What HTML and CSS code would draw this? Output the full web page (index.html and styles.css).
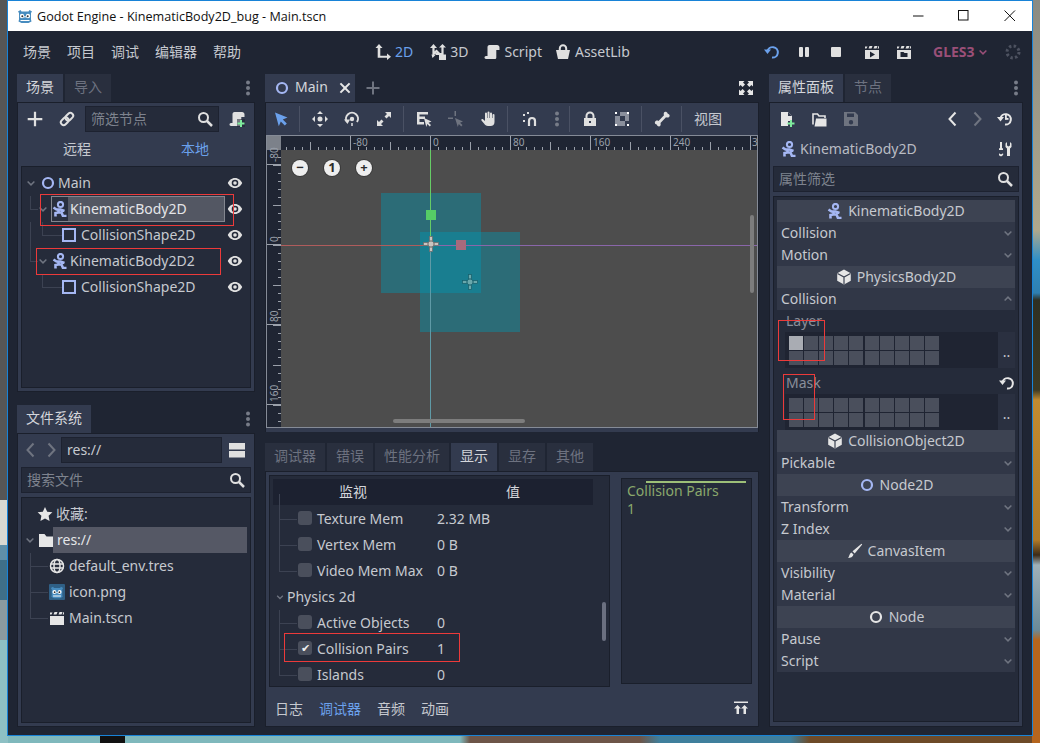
FILE: index.html
```html
<!DOCTYPE html>
<html lang="zh">
  <head>
    <meta charset="UTF-8" />
    <title>Godot Engine - KinematicBody2D_bug - Main.tscn</title>
    <link rel="stylesheet" href="styles.css">
  </head>
  <body>
    <!-- icon sheet -->
    <svg class="defs" xmlns="http://www.w3.org/2000/svg">
      <symbol id="i-godot" viewBox="0 0 16 16">
        <path fill="#478cbf" d="M2 5 1 3.5 3.5 2l1 1.500h7l1-1.500L15 3.500 14 5v6.500l.5 2-3 1.500H4.500l-3-1.500.5-2z"/>
        <circle cx="5" cy="8" r="2.200" fill="#fff"/><circle cx="11" cy="8" r="2.200" fill="#fff"/>
        <circle cx="5.300" cy="8.200" r="1" fill="#333"/><circle cx="10.700" cy="8.200" r="1" fill="#333"/>
        <path fill="#fff" d="M7.300 8h1.400v1.500H7.300zM3.500 12h9v1h-9z"/>
      </symbol>
      <symbol id="i-2d" viewBox="0 0 16 16">
        <path fill="currentColor" d="M4 0l3.500 4h-2.200v7.700H12V9.500l4 3.300-4 3.200v-2.300H2.700V4H.5z"/>
      </symbol>
      <symbol id="i-3d" viewBox="0 0 16 16">
        <path fill="none" stroke="currentColor" stroke-width="2.200" d="M3.500 3v7l3-3 6 6M12.500 3v7h-7"/>
        <path fill="currentColor" d="M0 4l3.500-4L7 4zM9 3.500L12.500 0 16 3.500zM9 10.500h7V16H9zM1.500 10.500l4 .5-3 3z"/>
      </symbol>
      <symbol id="i-script" viewBox="0 0 16 16">
        <path fill="currentColor" d="M5.500 1H13c1.500 0 2.500 1 2.500 2.500V6h-3.200v7.500c0 1-.7 1.500-1.500 1.500H2c-1 0-1.500-.7-1.500-1.400S1 12 2 12h1.500V3c0-1.300 1-2 2-2z"/>
      </symbol>
      <symbol id="i-bag" viewBox="0 0 16 16">
        <path fill="none" stroke="currentColor" stroke-width="2" d="M4.800 7V4.500a3.200 3.200 0 0 1 6.400 0V7"/>
        <path fill="currentColor" d="M1 6h14l-2 9H3z"/>
      </symbol>
      <symbol id="i-reload" viewBox="0 0 16 16">
        <path fill="none" stroke="currentColor" stroke-width="2" d="M3.500 7.500A5.200 5.200 0 1 1 8 13.500"/>
        <path fill="currentColor" d="M0 5.500h7L3.500 10z"/>
      </symbol>
      <symbol id="i-pause" viewBox="0 0 16 16">
        <rect x="3" y="3" width="4" height="10" rx="1" fill="currentColor"/><rect x="9" y="3" width="4" height="10" rx="1" fill="currentColor"/>
      </symbol>
      <symbol id="i-stop" viewBox="0 0 16 16"><rect x="3" y="3" width="10" height="10" rx="1" fill="currentColor"/></symbol>
      <symbol id="i-clap" viewBox="0 0 16 16">
        <path fill="currentColor" d="M1 6h14v9H1zM1 2.500h2.500l-1 2H1zM5.500 2h3l-1 2.500h-3zM10.500 2h3l-1 2.500h-3zM14.500 2h.5v2.500h-1.500z"/>
      </symbol>
      <symbol id="i-clap-play" viewBox="0 0 16 16">
        <use href="#i-clap"/><path fill="#1f2533" d="M6 7.500l5 3-5 3z"/>
      </symbol>
      <symbol id="i-clap-folder" viewBox="0 0 16 16">
        <use href="#i-clap"/><path fill="#1f2533" d="M4.500 8h3l1 1h3v4h-7z"/>
      </symbol>
      <symbol id="i-spin" viewBox="0 0 16 16">
        <circle cx="8" cy="8" r="6" fill="none" stroke="#4d5260" stroke-width="3" stroke-dasharray="2.400 2.300"/>
      </symbol>
      <symbol id="i-expand" viewBox="0 0 16 16">
        <path id="corner" fill="currentColor" d="M1 1h5.500L5 2.600l2 2L4.600 7l-2-2L1 6.500z"/>
        <use href="#corner" transform="matrix(-1 0 0 1 16 0)"/>
        <use href="#corner" transform="matrix(1 0 0 -1 0 16)"/>
        <use href="#corner" transform="matrix(-1 0 0 -1 16 16)"/>
      </symbol>
      <symbol id="i-dots" viewBox="0 0 16 16">
        <circle cx="8" cy="2.500" r="2" fill="currentColor"/><circle cx="8" cy="8" r="2" fill="currentColor"/><circle cx="8" cy="13.500" r="2" fill="currentColor"/>
      </symbol>
      <symbol id="i-plus" viewBox="0 0 16 16"><path fill="currentColor" d="M7 1.500h2V7h5.500v2H9v5.500H7V9H1.500V7H7z"/></symbol>
      <symbol id="i-close" viewBox="0 0 16 16"><path fill="currentColor" d="M7 1.500h2V7h5.500v2H9v5.500H7V9H1.500V7H7z" transform="rotate(45 8 8)"/></symbol>
      <symbol id="i-link" viewBox="0 0 16 16">
        <g fill="none" stroke="currentColor" stroke-width="2" transform="rotate(-45 8 8)"><rect x=".5" y="5.200" width="8.500" height="5.600" rx="2.800"/><rect x="7" y="5.200" width="8.500" height="5.600" rx="2.800"/></g>
      </symbol>
      <symbol id="i-search" viewBox="0 0 16 16">
        <circle cx="6.500" cy="6.500" r="4.500" fill="none" stroke="currentColor" stroke-width="2"/>
        <path stroke="currentColor" stroke-width="2.500" d="M10 10l5 5"/>
      </symbol>
      <symbol id="i-script-add" viewBox="0 0 16 16">
        <use href="#i-script"/>
        <path fill="#1f2533" d="M8 8h8v8H8z" opacity=".55"/><path fill="#7fec9d" d="M11 9h2v2.500h2.500v2H13V16h-2v-2.500H8.500v-2H11z"/>
      </symbol>
      <symbol id="i-arrow" viewBox="0 0 16 16"><path fill="currentColor" d="M2 1.500l12.500 5-4.700 2 4 4-2 2-4-4-2 4.700z"/></symbol>
      <symbol id="i-move" viewBox="0 0 16 16">
        <circle cx="8" cy="8" r="2.500" fill="currentColor"/>
        <path fill="currentColor" d="M8 0l3 3H5zM8 16l-3-3h6zM0 8l3-3v6zM16 8l-3 3V5z"/>
      </symbol>
      <symbol id="i-rotate" viewBox="0 0 16 16">
        <path fill="none" stroke="currentColor" stroke-width="2" d="M3 11A6 6 0 1 1 13 11"/>
        <path fill="currentColor" d="M0 8.500h6L3.500 13z"/><circle cx="8" cy="8" r="2.200" fill="currentColor"/>
        <path fill="none" stroke="currentColor" stroke-width="1.500" d="M8 12v3"/>
      </symbol>
      <symbol id="i-scale" viewBox="0 0 16 16">
        <path fill="currentColor" d="M9 1h6v6l-2-2-2.500 2.500-2-2L11 3zM7 15H1V9l2 2 2.500-2.500 2 2L5 13z"/>
      </symbol>
      <symbol id="i-list-select" viewBox="0 0 16 16">
        <path fill="currentColor" d="M1 1h11v2.500H3.500v2H9V8H3.500v3H8v2.500H1z"/>
        <path fill="currentColor" d="M8 7l7.500 3.500-3 1.200 2.500 2.300-1.200 1.500-2.500-2.500-1 3z"/>
      </symbol>
      <symbol id="i-pivot-dim" viewBox="0 0 16 16">
        <path fill="currentColor" d="M6.500 0h1.500v5H6.500zM0 6.500h5V8H0zM7 7l8 3.500-3 1.200 2.500 2.300-1.200 1.500-2.500-2.500-1 3z"/>
      </symbol>
      <symbol id="i-hand" viewBox="0 0 16 16">
        <path fill="currentColor" d="M5 7V2.500a1 1 0 0 1 2 0V7h.5V1.500a1 1 0 0 1 2 0V7h.5V2.500a1 1 0 0 1 2 0V7h.5V4a1 1 0 0 1 2 0v7c0 2.500-1.500 4-4 4H8c-2 0-3-1-4-2.500L1.500 9.500c-.8-1 .5-2.200 1.500-1.300L5 10z"/>
      </symbol>
      <symbol id="i-snap" viewBox="0 0 16 16">
        <path fill="none" stroke="currentColor" stroke-width="2.200" d="M7 15V10a3 3 0 0 1 6 0v5"/>
        <path fill="currentColor" d="M1 3h2v2H1zM5 1h2v2H5zM1 9h2v2H1z"/>
      </symbol>
      <symbol id="i-lock" viewBox="0 0 16 16">
        <path fill="none" stroke="currentColor" stroke-width="2" d="M4.500 8V5a3.500 3.500 0 0 1 7 0v3"/>
        <path fill="currentColor" fill-rule="evenodd" d="M2 7h12v8H2zM7 10v2h2v-2z"/>
      </symbol>
      <symbol id="i-group" viewBox="0 0 16 16">
        <path fill="#8a8f9c" d="M1 5h10v10H1z"/><path fill="#8a8f9c" d="M6 1h9v9H6z"/>
        <path fill="#333b4f" d="M6 5h5v5H6z"/>
        <path fill="#fff" d="M1 1h2v2H1zM13 1h2v2h-2zM1 13h2v2H1zM13 13h2v2h-2z"/>
      </symbol>
      <symbol id="i-bone" viewBox="0 0 16 16">
        <path fill="currentColor" d="M10 1.500c.8-1.300 3-1 3.500.7.200.5.500.7 1 .8 1.500.5 1.500 2.700.3 3.300-1 .5-2 .3-2.800 0L6.500 12c.3.800.3 1.800-.2 2.700-.6 1.200-2.800 1-3.300-.7-.2-.5-.5-.7-1-.8C.5 12.700.5 10.500 1.700 9.900c1-.5 2-.3 2.800 0L10 4.300c-.3-.8-.4-2 0-2.800z"/>
      </symbol>
      <symbol id="i-eye" viewBox="0 0 16 16">
        <path fill="currentColor" fill-rule="evenodd" d="M8 3C4.500 3 2 5.500 .8 8 2 10.500 4.500 13 8 13s6-2.500 7.200-5C14 5.500 11.500 3 8 3zm0 1.700a3.300 3.300 0 1 1 0 6.600 3.300 3.300 0 0 1 0-6.600z"/>
        <circle cx="8" cy="8" r="1.800" fill="currentColor"/>
      </symbol>
      <symbol id="i-down" viewBox="0 0 16 16"><path fill="none" stroke="currentColor" stroke-width="2" d="M3.500 6L8 10.500 12.500 6"/></symbol>
      <symbol id="i-up" viewBox="0 0 16 16"><path fill="none" stroke="currentColor" stroke-width="2" d="M3.500 10L8 5.500 12.500 10"/></symbol>
      <symbol id="i-left" viewBox="0 0 16 16"><path fill="none" stroke="currentColor" stroke-width="2" d="M10.500 1.500L4.500 8l6 6.500"/></symbol>
      <symbol id="i-right" viewBox="0 0 16 16"><path fill="none" stroke="currentColor" stroke-width="2" d="M5.500 1.500l6 6.500-6 6.500"/></symbol>
      <symbol id="i-body" viewBox="0 0 16 16">
        <circle cx="8.500" cy="3.500" r="2.600" fill="none" stroke="currentColor" stroke-width="2"/>
        <path fill="none" stroke="currentColor" stroke-width="2.600" d="M1.500 6.500l3 2h4l4 1.500M6.500 8.500v3l-3 .5v3.500M6.500 11.500h3l1.500 3.500h3.500"/>
      </symbol>
      <symbol id="i-square" viewBox="0 0 16 16"><rect x="2" y="2" width="12" height="12" fill="none" stroke="currentColor" stroke-width="2"/></symbol>
      <symbol id="i-circle" viewBox="0 0 16 16"><circle cx="8" cy="8" r="5" fill="none" stroke="currentColor" stroke-width="2.200"/></symbol>
      <symbol id="i-split" viewBox="0 0 16 16"><path fill="currentColor" d="M0 1h16v6.500H0zM0 9h16v6.500H0z"/></symbol>
      <symbol id="i-star" viewBox="0 0 16 16"><path fill="currentColor" d="M8 1l2.200 4.700 5.200.6-3.800 3.500 1 5.200L8 12.400 3.400 15l1-5.200L.6 6.300l5.200-.6z"/></symbol>
      <symbol id="i-folder" viewBox="0 0 16 16"><path fill="currentColor" d="M1 2h5.500l2 2.500H15V15H1z"/></symbol>
      <symbol id="i-folder-open" viewBox="0 0 16 16">
        <path fill="none" stroke="currentColor" stroke-width="1.600" d="M2 13.500V3h4.500l1.500 2h6v2"/>
        <path fill="currentColor" d="M3.500 15.500l1.500-8h10.500v8z"/>
      </symbol>
      <symbol id="i-globe" viewBox="0 0 16 16">
        <g fill="none" stroke="currentColor" stroke-width="1.500"><circle cx="8" cy="8" r="6.500"/><ellipse cx="8" cy="8" rx="3" ry="6.500"/><path d="M1.500 6h13M1.500 10h13"/></g>
      </symbol>
      <symbol id="i-icon-file" viewBox="0 0 16 16">
        <rect width="16" height="16" rx="1" fill="#2f5f85"/>
        <use href="#i-godot" x="1" y="1" width="14" height="14"/>
      </symbol>
      <symbol id="i-file-add" viewBox="0 0 16 16">
        <path fill="currentColor" d="M2 1h7l4 4v5H9v5H2z"/><path fill="#333b4f" d="M9 1v4h4z"/>
        <path fill="#7fec9d" d="M11 9h2v2.500h2.500v2H13V16h-2v-2.500H8.500v-2H11z"/>
      </symbol>
      <symbol id="i-save" viewBox="0 0 16 16">
        <path fill="currentColor" fill-rule="evenodd" d="M1 1h11l3 3v11H1zM4 2.500V6h7V2.500zM8 9a2.200 2.200 0 1 0 0 4.400A2.200 2.200 0 0 0 8 9z"/>
      </symbol>
      <symbol id="i-history" viewBox="0 0 16 16">
        <path fill="none" stroke="currentColor" stroke-width="2" d="M3.500 7.500A5.200 5.200 0 1 1 8 13.500"/>
        <path fill="currentColor" d="M0 6h7l-3.500 4.500zM8 4h1.800v4.200H8z"/><path fill="currentColor" d="M8 7h3.500v1.800H8z"/>
      </symbol>
      <symbol id="i-tools" viewBox="0 0 16 16">
        <path fill="currentColor" d="M3 1h2v6l1 .5V12a2 2 0 0 1-4 2v-2V7.500L3 7zM2 9v3a2.200 2.200 0 0 0 4 0V9zM10 1v3.500l1.500 1L13 4.500V1l1.500 1.500V6L13 7.500V15h-3V7.500L8.500 6V2.500z"/>
      </symbol>
      <symbol id="i-cube" viewBox="0 0 16 16">
        <path fill="currentColor" d="M8 .5l6.800 3.700v7.600L8 15.500l-6.800-3.700V4.200z"/>
        <path fill="none" stroke="#3d4352" stroke-width="1.200" d="M1.500 4.500L8 8l6.500-3.500M8 8v7"/>
      </symbol>
      <symbol id="i-brush" viewBox="0 0 16 16">
        <path fill="currentColor" d="M14.500.8l.7.7-7.500 9-2.200-2.200zM4.500 9.500l2 2c-.5 2.500-3 3.500-5.500 3.500 1.500-1 1-4.500 3.500-5.500z"/>
      </symbol>
      <symbol id="i-collapse" viewBox="0 0 16 16">
        <path fill="currentColor" d="M1 1.500h14V3H1zM4.500 5L8 8.500H6V14H3.500V8.500H1zM11.500 5L15 8.500h-2V14h-2.500V8.500H8z"/>
      </symbol>
      <symbol id="i-pivot" viewBox="0 0 24 24">
        <g stroke-width="1">
          <rect x="10" y="2" width="4" height="6"/><rect x="10" y="16" width="4" height="6"/><rect x="2" y="10" width="6" height="4"/><rect x="16" y="10" width="6" height="4"/>
          <circle cx="12" cy="12" r="4"/>
        </g>
      </symbol>
    </svg>

    <div class="window">
      <div class="titlebar">
        <svg class="logo"><use href="#i-godot"/></svg>
        <span class="title-text">Godot Engine - KinematicBody2D_bug - Main.tscn</span>
        <div class="win-btns">
          <svg class="win-btn" viewBox="0 0 12 12"><path stroke="#111" d="M1 6h10.500"/></svg>
          <svg class="win-btn" viewBox="0 0 12 12"><rect x=".5" y=".5" width="9.500" height="9.500" fill="none" stroke="#111"/></svg>
          <svg class="win-btn" viewBox="0 0 12 12"><path stroke="#111" d="M.5.500l10.500 10.500M11 .5L.5 11"/></svg>
        </div>
      </div>

      <div class="editor">
        <div class="menubar">
          <nav class="menu-left">
            <span>场景</span><span>项目</span><span>调试</span><span>编辑器</span><span>帮助</span>
          </nav>
          <div class="menu-center">
            <span class="workspace blue"><svg class="ico"><use href="#i-2d"/></svg>2D</span>
            <span class="workspace"><svg class="ico"><use href="#i-3d"/></svg>3D</span>
            <span class="workspace"><svg class="ico"><use href="#i-script"/></svg>Script</span>
            <span class="workspace"><svg class="ico"><use href="#i-bag"/></svg>AssetLib</span>
          </div>
          <div class="menu-right">
            <svg class="ico blue"><use href="#i-reload"/></svg>
            <svg class="ico"><use href="#i-pause"/></svg>
            <svg class="ico"><use href="#i-stop"/></svg>
            <svg class="ico clap-run"><use href="#i-clap-play"/></svg>
            <svg class="ico"><use href="#i-clap-folder"/></svg>
            <span class="gles">GLES3<svg class="ico-sm"><use href="#i-down"/></svg></span>
            <svg class="ico"><use href="#i-spin"/></svg>
          </div>
        </div>

        <div class="docks">
          <!-- left column -->
          <div class="col-left">
            <div class="tabs">
              <span class="tab active">场景</span>
              <span class="tab">导入</span>
              <svg class="ico dots"><use href="#i-dots"/></svg>
            </div>
            <section class="panel scene-panel">
              <div class="scene-tools">
                <svg class="ico-lg"><use href="#i-plus"/></svg>
                <svg class="ico"><use href="#i-link"/></svg>
                <div class="input scene-filter"><span>筛选节点</span><svg class="ico"><use href="#i-search"/></svg></div>
                <svg class="ico"><use href="#i-script-add"/></svg>
              </div>
              <div class="remote-row">
                <span>远程</span><span class="blue">本地</span>
              </div>
              <div class="tree">
                <div class="row">
                  <svg class="ico-sm chev"><use href="#i-down"/></svg>
                  <svg class="ico node"><use href="#i-circle"/></svg>
                  <span class="gap-2">Main</span>
                  <svg class="ico eye"><use href="#i-eye"/></svg>
                </div>
                <div class="row indent-1">
                  <span class="guide g-first"></span>
                  <svg class="ico-sm chev"><use href="#i-down"/></svg>
                  <span class="sel-wrap">
                    <svg class="ico node"><use href="#i-body"/></svg>
                    <span class="selected">KinematicBody2D</span>
                  </span>
                  <svg class="ico eye"><use href="#i-eye"/></svg>
                </div>
                <div class="row indent-2">
                  <span class="guide g-child"></span>
                  <svg class="ico node"><use href="#i-square"/></svg>
                  <span class="gap-4">CollisionShape2D</span>
                  <svg class="ico eye"><use href="#i-eye"/></svg>
                </div>
                <div class="row indent-1">
                  <span class="guide g-last"></span>
                  <svg class="ico-sm chev"><use href="#i-down"/></svg>
                  <svg class="ico node"><use href="#i-body"/></svg>
                  <span class="gap-2">KinematicBody2D2</span>
                  <svg class="ico eye"><use href="#i-eye"/></svg>
                </div>
                <div class="row indent-2">
                  <span class="guide g-child"></span>
                  <svg class="ico node"><use href="#i-square"/></svg>
                  <span class="gap-4">CollisionShape2D</span>
                  <svg class="ico eye"><use href="#i-eye"/></svg>
                </div>
              </div>
            </section>

            <div class="tabs fs-tabs">
              <span class="tab active">文件系统</span>
              <svg class="ico dots"><use href="#i-dots"/></svg>
            </div>
            <section class="panel fs-panel">
              <div class="fs-path">
                <svg class="ico dim"><use href="#i-left"/></svg>
                <svg class="ico dim"><use href="#i-right"/></svg>
                <div class="input path-input">res://</div>
                <svg class="ico"><use href="#i-split"/></svg>
              </div>
              <div class="input fs-search"><span>搜索文件</span><svg class="ico"><use href="#i-search"/></svg></div>
              <div class="tree fs-tree">
                <div class="row fs-fav">
                  <svg class="ico white"><use href="#i-star"/></svg>
                  <span class="gap-3">收藏:</span>
                </div>
                <div class="row fs-res">
                  <svg class="ico-sm chev"><use href="#i-down"/></svg>
                  <svg class="ico white"><use href="#i-folder"/></svg>
                  <span class="fs-selected">res://</span>
                </div>
                <div class="row fs-file">
                  <span class="guide g-fs-first"></span>
                  <svg class="ico white"><use href="#i-globe"/></svg>
                  <span class="gap-4">default_env.tres</span>
                </div>
                <div class="row fs-file">
                  <span class="guide g-fs"></span>
                  <svg class="ico"><use href="#i-icon-file"/></svg>
                  <span class="gap-4">icon.png</span>
                </div>
                <div class="row fs-file">
                  <span class="guide g-fs"></span>
                  <svg class="ico white"><use href="#i-clap"/></svg>
                  <span class="gap-4">Main.tscn</span>
                </div>
              </div>
            </section>
          </div>

          <!-- centre column -->
          <div class="col-center">
            <div class="tabs">
              <span class="tab active main-tab">
                <svg class="ico node"><use href="#i-circle"/></svg>
                <span>Main</span>
                <svg class="ico white close"><use href="#i-close"/></svg>
              </span>
              <svg class="ico add-tab"><use href="#i-plus"/></svg>
              <svg class="ico white expand"><use href="#i-expand"/></svg>
            </div>
            <section class="panel view-panel">
              <div class="toolbar">
                <span class="tool first"><svg class="ico blue"><use href="#i-arrow"/></svg></span>
                <span class="sep"></span>
                <span class="tool"><svg class="ico"><use href="#i-move"/></svg></span>
                <span class="tool"><svg class="ico"><use href="#i-rotate"/></svg></span>
                <span class="tool"><svg class="ico"><use href="#i-scale"/></svg></span>
                <span class="sep"></span>
                <span class="tool"><svg class="ico"><use href="#i-list-select"/></svg></span>
                <span class="tool dim"><svg class="ico"><use href="#i-pivot-dim"/></svg></span>
                <span class="tool"><svg class="ico"><use href="#i-hand"/></svg></span>
                <span class="sep"></span>
                <span class="tool snap"><svg class="ico"><use href="#i-snap"/></svg></span>
                <span class="tool more"><svg class="ico"><use href="#i-dots"/></svg></span>
                <span class="sep"></span>
                <span class="tool"><svg class="ico"><use href="#i-lock"/></svg></span>
                <span class="tool"><svg class="ico"><use href="#i-group"/></svg></span>
                <span class="sep"></span>
                <span class="tool"><svg class="ico"><use href="#i-bone"/></svg></span>
                <span class="sep"></span>
                <span class="view-menu">视图</span>
              </div>
              <div class="viewport">
                <div class="ruler-corner"></div>
                <div class="ruler-h">
                  <span>-80</span><span>0</span><span>80</span><span>160</span><span>240</span><span>3</span>
                </div>
                <div class="ruler-v">
                  <span>-80</span><span>0</span><span>80</span><span>160</span>
                </div>
                <div class="canvas">
                  <div class="shape s1"></div>
                  <div class="shape s2"></div>
                  <div class="axis ax-green"></div>
                  <div class="axis ax-cyan"></div>
                  <div class="axis ax-red"></div>
                  <div class="axis ax-violet"></div>
                  <div class="handle h-green"></div>
                  <div class="handle h-pink"></div>
                  <svg class="pivot p1"><use href="#i-pivot"/></svg>
                  <svg class="pivot p2"><use href="#i-pivot"/></svg>
                  <div class="zoom-btns">
                    <span class="zoom-btn">&minus;</span><span class="zoom-btn">1</span><span class="zoom-btn">+</span>
                  </div>
                  <div class="scroll sv"></div>
                  <div class="scroll sh"></div>
                </div>
              </div>
            </section>

            <div class="tabs bottom-tabs">
              <span class="tab">调试器</span>
              <span class="tab">错误</span>
              <span class="tab">性能分析</span>
              <span class="tab active">显示</span>
              <span class="tab">显存</span>
              <span class="tab">其他</span>
            </div>
            <section class="panel debug-panel">
              <div class="debug-body">
                <div class="monitors">
                  <div class="mon-head"><span>监视</span><span>值</span></div>
                  <div class="mon-row"><span class="guide g-mon"></span><span class="check"></span><span class="mon-name">Texture Mem</span><span>2.32 MB</span></div>
                  <div class="mon-row"><span class="guide g-mon"></span><span class="check"></span><span class="mon-name">Vertex Mem</span><span>0 B</span></div>
                  <div class="mon-row"><span class="guide g-mon"></span><span class="check"></span><span class="mon-name">Video Mem Max</span><span>0 B</span></div>
                  <div class="mon-group"><svg class="ico-xs chev"><use href="#i-down"/></svg>Physics 2d</div>
                  <div class="mon-row"><span class="guide g-mon-first"></span><span class="check"></span><span class="mon-name">Active Objects</span><span>0</span></div>
                  <div class="mon-row"><span class="guide g-mon"></span><span class="check on">&#10004;</span><span class="mon-name">Collision Pairs</span><span>1</span></div>
                  <div class="mon-row"><span class="guide g-mon"></span><span class="check"></span><span class="mon-name">Islands</span><span>0</span></div>
                  <div class="mon-scroll"></div>
                </div>
                <div class="graph">
                  <div class="graph-line"></div>
                  <div>Collision Pairs</div>
                  <div>1</div>
                </div>
              </div>
              <div class="debug-bar">
                <span>日志</span><span class="blue">调试器</span><span>音频</span><span>动画</span>
                <svg class="ico white"><use href="#i-collapse"/></svg>
              </div>
            </section>
          </div>

          <!-- right column -->
          <div class="col-right">
            <div class="tabs">
              <span class="tab active">属性面板</span>
              <span class="tab">节点</span>
              <svg class="ico dots"><use href="#i-dots"/></svg>
            </div>
            <section class="panel inspector">
              <div class="insp-tools">
                <svg class="ico white"><use href="#i-file-add"/></svg>
                <svg class="ico white"><use href="#i-folder-open"/></svg>
                <svg class="ico dim-ico"><use href="#i-save"/></svg>
                <svg class="ico back white"><use href="#i-left"/></svg>
                <svg class="ico dim-ico"><use href="#i-right"/></svg>
                <svg class="ico white"><use href="#i-history"/></svg>
              </div>
              <div class="insp-node">
                <svg class="ico node"><use href="#i-body"/></svg>
                <span>KinematicBody2D</span>
                <svg class="ico white"><use href="#i-tools"/></svg>
              </div>
              <div class="input insp-filter"><span>属性筛选</span><svg class="ico"><use href="#i-search"/></svg></div>
              <div class="props">
                <div class="section"><svg class="ico node"><use href="#i-body"/></svg>KinematicBody2D</div>
                <div class="prop">Collision<svg class="ico-sm chev"><use href="#i-down"/></svg></div>
                <div class="prop">Motion<svg class="ico-sm chev"><use href="#i-down"/></svg></div>
                <div class="section"><svg class="ico white"><use href="#i-cube"/></svg>PhysicsBody2D</div>
                <div class="prop">Collision<svg class="ico-sm chev"><use href="#i-up"/></svg></div>
                <div class="layer-label">Layer</div>
                <div class="layers">
                  <div class="cells"><i class="lit"></i><i></i><i></i><i></i><i></i><i></i><i></i><i></i><i></i><i></i></div>
                  <div class="cells"><i></i><i></i><i></i><i></i><i></i><i></i><i></i><i></i><i></i><i></i></div>
                  <span class="more-btn">..</span>
                </div>
                <div class="layer-label mask">Mask<svg class="ico white"><use href="#i-reload"/></svg></div>
                <div class="layers">
                  <div class="cells"><i></i><i></i><i></i><i></i><i></i><i></i><i></i><i></i><i></i><i></i></div>
                  <div class="cells"><i></i><i></i><i></i><i></i><i></i><i></i><i></i><i></i><i></i><i></i></div>
                  <span class="more-btn">..</span>
                </div>
                <div class="section"><svg class="ico white"><use href="#i-cube"/></svg>CollisionObject2D</div>
                <div class="prop">Pickable<svg class="ico-sm chev"><use href="#i-down"/></svg></div>
                <div class="section"><svg class="ico node"><use href="#i-circle"/></svg>Node2D</div>
                <div class="prop">Transform<svg class="ico-sm chev"><use href="#i-down"/></svg></div>
                <div class="prop">Z Index<svg class="ico-sm chev"><use href="#i-down"/></svg></div>
                <div class="section"><svg class="ico white"><use href="#i-brush"/></svg>CanvasItem</div>
                <div class="prop">Visibility<svg class="ico-sm chev"><use href="#i-down"/></svg></div>
                <div class="prop">Material<svg class="ico-sm chev"><use href="#i-down"/></svg></div>
                <div class="section"><svg class="ico white"><use href="#i-circle"/></svg>Node</div>
                <div class="prop">Pause<svg class="ico-sm chev"><use href="#i-down"/></svg></div>
                <div class="prop">Script<svg class="ico-sm chev"><use href="#i-down"/></svg></div>
              </div>
            </section>
          </div>
        </div>
      </div>

      <!-- hand drawn red marks on the screenshot -->
      <div class="mark m1"></div>
      <div class="mark m2"></div>
      <div class="mark m3"></div>
      <div class="mark m4"></div>
      <div class="mark m5"></div>
    </div>
  </body>
</html>
```

FILE: styles.css
```css
* {
  box-sizing: border-box;
}

/* Desktop wallpaper showing around the window */
html {
  height: 100%;
  background:
    linear-gradient(180deg, #565656 0 500px, #d9d8d0 500px 545px, #5f8fa8 545px 560px, #3f6f88 560px 600px, #8b9aa0 600px 640px, #8dc0c4 640px) 0 0 / 8px 100% no-repeat,
    linear-gradient(180deg, #8a8a82 0, #b0a88c 230px, #2f8fc7 260px, #2f7fb0 293px, #2e2f22 300px, #3d3a24 390px, #c08a30 400px, #b07a28 540px, #3a2a18 555px, #9fb0b8 565px, #6a8a98 630px, #b5651d 640px) 100% 0 / 8px 100% no-repeat,
    linear-gradient(90deg, #7fb8bc 0 100px, #111 100px 125px, #7fb8bc 125px 460px, #6d5548 470px 640px, #3f7f9c 660px 790px, #6d4a28 810px) 0 100% / 100% 8px no-repeat,
    #333;
}

body {
  margin: 0;
  height: 100%;
  font-family: "Noto Sans", "Noto Sans CJK SC", sans-serif;
  font-size: 14px;
  color: #c6c9cf;
}

.defs {
  display: none;
}

svg {
  flex: none;
  display: block;
}

.ico { width: 16px; height: 16px; color: #e0e0e0; }
.ico-lg { width: 18px; height: 18px; color: #e0e0e0; }
.ico-sm { width: 12px; height: 12px; color: #6f7480; }
.ico-xs { width: 10px; height: 10px; color: #6f7480; }
.blue { color: #6ba1ec; }
.ico.blue { color: #6ba1ec; }
.ico.node { color: #a5b7f3; }
.ico.white { color: #e6e6e6; }
.ico.dim { color: #6f7480; }
.ico.dim-ico { color: #6f7480; }
.chev { color: #6f7480; }

/* The font sits low in its line box: lift the text, keep icons centred */
.row, .prop, .section, .layer-label, .mon-row, .mon-head, .mon-group, .input, .insp-node, .remote-row, .menu-left {
  padding-bottom: 2px;
}

.row svg, .prop svg, .section svg, .mon-group svg, .input svg, .insp-node svg {
  margin-bottom: -2px;
}

.window {
  position: relative;
  margin-left: 7px;
  width: 1026px;
  height: 736px;
  border: 1px solid #1883d7;
  display: flex;
  flex-direction: column;
  overflow: hidden;
}

/* Title bar */
.titlebar {
  height: 30px;
  background: #fff;
  display: flex;
  align-items: center;
  padding-left: 9px;
  color: #111;
  font-size: 12.6px;
  font-family: "Open Sans", "Noto Sans", sans-serif;
}

.logo {
  width: 16px;
  height: 16px;
  margin-right: 4px;
}

.win-btns {
  margin-left: auto;
  display: flex;
  align-items: center;
  gap: 34px;
  padding-right: 16px;
}

.win-btn {
  width: 12px;
  height: 12px;
}

/* Editor */
.editor {
  flex: 1;
  background: #1f2533;
  display: flex;
  flex-direction: column;
  min-height: 0;
}

.menubar {
  height: 43px;
  flex: none;
  display: flex;
  align-items: center;
  padding: 0 0 2px 15px;
}

.menu-left {
  width: 352px;
  display: flex;
  gap: 16px;
}

.menu-center {
  width: 389px;
  display: flex;
}

.workspace {
  display: flex;
  align-items: center;
  gap: 4px;
}

.workspace:nth-child(2) { margin-left: 17px; }
.workspace:nth-child(3) { margin-left: 16px; }
.workspace:nth-child(4) { margin-left: 13px; }

.menu-right {
  flex: 1;
  display: flex;
  align-items: center;
  gap: 16px;
}

.clap-run { margin-left: 4px; }

.gles {
  display: flex;
  align-items: center;
  gap: 2px;
  font-weight: 700;
  font-size: 14px;
  color: #9a4f78;
  margin-left: 5px;
}

.gles .ico-sm { color: #9a4f78; }

.docks {
  flex: 1;
  display: flex;
  gap: 10px;
  padding: 0 9px 8px;
  min-height: 0;
}

.col-left { width: 238px; flex: none; display: flex; flex-direction: column; }
.col-center { width: 494px; flex: none; display: flex; flex-direction: column; }
.col-right { width: 254px; flex: none; display: flex; flex-direction: column; }

/* Tabs */
.tabs {
  height: 28px;
  flex: none;
  display: flex;
  align-items: stretch;
  gap: 2px;
  position: relative;
}

.tab {
  display: flex;
  align-items: center;
  padding: 0 9px 4px;
  background: #292f3e;
  color: #6d7280;
}

.tab.active {
  background: #333b4f;
  color: #d4d6db;
}

.dots {
  align-self: center;
  margin-left: auto;
  margin-right: -1px;
  color: #777c88;
}

.panel {
  background: #333b4f;
  border: 1px solid #1a1f2b;
}

.input {
  background: #252b3a;
  border: 1px solid #1d2230;
  height: 26px;
  display: flex;
  align-items: center;
  justify-content: space-between;
  padding-left: 5px;
  padding-right: 5px;
  color: #7e838e;
}

/* Scene dock */
.scene-panel {
  height: 290px;
  display: flex;
  flex-direction: column;
}

.scene-tools {
  display: flex;
  align-items: center;
  height: 26px;
  margin-top: 3px;
  padding-left: 8px;
}

.scene-tools svg:nth-child(2) { margin-left: 15px; }
.scene-filter { width: 134px; margin-left: 10px; }
.scene-tools > svg:last-child { margin-left: 10px; }

.remote-row {
  height: 34px;
  display: flex;
  align-items: center;
  padding-left: 45px;
  gap: 90px;
}

.tree {
  flex: 1;
  margin: 0 3px 3px;
  background: #252b3a;
  border: 1px solid #1a1f2b;
  padding-top: 3px;
}

.row {
  position: relative;
  height: 26px;
  display: flex;
  align-items: center;
  padding-left: 3px;
  padding-right: 7px;
}

.row .ico-sm { margin-right: 3px; }
.gap-4 { margin-left: 4px; }
.gap-3 { margin-left: 3px; }
.gap-2 { margin-left: 2px; }
.eye { margin-left: auto; }
.indent-1 { padding-left: 15px; }
.indent-2 { padding-left: 39px; }

.sel-wrap {
  display: flex;
  align-items: center;
  width: 174px;
  height: 26px;
  margin: 0 0 -2px -1px;
  border: 1px solid #83868f;
  background: #292f3e;
}

.sel-wrap svg {
  margin-bottom: 0;
}

.selected {
  flex: 1;
  height: 100%;
  display: flex;
  align-items: center;
  background: #535763;
  color: #e4e5e8;
  padding: 0 0 2px 2px;
}

/* Tree guide lines */
.guide {
  position: absolute;
  border-left: 1px solid #3c4252;
  border-bottom: 1px solid #3c4252;
}

.g-first { left: 8px; top: 0; width: 8px; height: 14px; }
.g-last { left: 8px; top: -26px; width: 8px; height: 40px; }
.g-child { left: 20px; top: 0; width: 20px; height: 14px; }
.g-fs-first { left: 8px; top: 0; width: 18px; height: 14px; }
.g-fs { left: 8px; top: -12px; width: 18px; height: 26px; }
.g-mon { left: 6px; top: -12px; width: 18px; height: 26px; }
.g-mon-first { left: 6px; top: 0; width: 18px; height: 14px; }

/* File system dock */
.fs-tabs { margin-top: 13px; }

.fs-panel {
  flex: 1;
  display: flex;
  flex-direction: column;
}

.fs-path {
  display: flex;
  align-items: center;
  height: 26px;
  margin-top: 3px;
  padding-left: 5px;
  gap: 4px;
}

.path-input {
  width: 161px;
  margin-left: -2px;
  color: #c6c9cf;
}

.fs-path > svg:last-child { margin-left: 3px; }
.fs-search { margin: 4px 3px; }
.fs-fav { padding-left: 15px; }
.fs-res { padding-left: 2px; padding-right: 0; }
.fs-res .ico-sm { margin-right: 2px; }

.fs-selected {
  flex: 1;
  height: 26px;
  margin: 0 3px -2px -1px;
  display: flex;
  align-items: center;
  background: #555865;
  color: #e4e5e8;
  padding: 0 0 2px 4px;
}

.fs-file { padding-left: 27px; }

/* Centre: viewport */
.main-tab {
  gap: 5px;
  width: 90px;
  padding-right: 0;
  color: #a9adb5;
}

.main-tab svg { margin-bottom: -4px; }
.close { margin-left: auto; margin-right: 2px; }
.add-tab { align-self: center; margin-left: 8px; color: #6f7480; }
.expand { align-self: center; margin-left: auto; margin-right: 5px; }

.view-panel {
  height: 330px;
  display: flex;
  flex-direction: column;
  border-bottom: none;
}

.toolbar {
  height: 32px;
  flex: none;
  display: flex;
  align-items: center;
}

.tool {
  width: 32px;
  display: flex;
  justify-content: center;
}

.tool.first { width: 30px; }
.tool.dim .ico { color: #6f7480; }
.tool.snap { width: 36px; }
.tool.more { width: 18px; }
.tool.more .ico { color: #777c88; }

.sep {
  width: 1px;
  height: 26px;
  background: #4a5164;
  margin: 0 4px 0 3px;
}

.view-menu { margin-left: 8px; padding-bottom: 2px; }

.viewport {
  width: 492px;
  height: 293px;
  border: 1px solid #858b97;
  display: grid;
  grid-template-columns: 14px 1fr;
  grid-template-rows: 14px 1fr;
  background: #4d4d4d;
  overflow: hidden;
}

.ruler-corner {
  background: #7c818a;
}

.ruler-h {
  display: flex;
  padding-left: 69px;
  background:
    linear-gradient(90deg, #9aa0aa 1px, transparent 1px) 5px 100% / 8px 3px repeat-x,
    linear-gradient(90deg, #9aa0aa 1px, transparent 1px) 29px 100% / 40px 8px repeat-x,
    #1f2533;
}

.ruler-h span {
  flex: 0 0 80px;
  border-left: 1px solid #9aa0aa;
  padding-left: 2px;
  font-size: 10px;
  line-height: 13px;
  color: #9aa0aa;
}

.ruler-h span:last-child {
  flex-basis: 6px;
  padding-left: 1px;
}

.ruler-v {
  display: flex;
  flex-direction: column;
  background:
    linear-gradient(180deg, #9aa0aa 1px, transparent 1px) 100% 7px / 3px 8px repeat-y,
    linear-gradient(180deg, #9aa0aa 1px, transparent 1px) 100% 15px / 8px 40px repeat-y,
    #1f2533;
}

.ruler-v span {
  flex: 0 0 80px;
  border-top: 1px solid #9aa0aa;
  padding-top: 2px;
  font-size: 10px;
  line-height: 14px;
  color: #9aa0aa;
  writing-mode: vertical-rl;
  transform: rotate(180deg);
}

.ruler-v span:first-child {
  margin-top: -65px;
}

.canvas {
  position: relative;
  overflow: hidden;
}

.shape {
  position: absolute;
  width: 100px;
  height: 100px;
  background: rgba(0, 153, 179, 0.42);
}

.s1 { left: 100px; top: 43px; }
.s2 { left: 139px; top: 82px; }

.axis { position: absolute; }
.ax-green { left: 149px; top: 0; width: 1px; height: 95px; background: #66cc66; }
.ax-cyan { left: 149px; top: 95px; width: 1px; height: 190px; background: #5f9aa6; }
.ax-red { left: 0; top: 95px; width: 149px; height: 1px; background: #b05c5c; }
.ax-violet { left: 150px; top: 95px; width: 330px; height: 1px; background: #8a66aa; }

.handle { position: absolute; width: 10px; height: 10px; }
.h-green { left: 145px; top: 60px; background: #55cc66; }
.h-pink { left: 175px; top: 90px; background: #a86a7c; }

.pivot { position: absolute; width: 18px; height: 18px; }
.p1 { left: 141px; top: 85px; fill: #c9c4c0; stroke: #6b6b6b; }
.p2 { left: 180px; top: 123px; fill: #6aa8ac; stroke: #17606c; }

.zoom-btns {
  position: absolute;
  left: 11px;
  top: 10px;
  display: flex;
  gap: 16px;
}

.zoom-btn {
  width: 16px;
  height: 16px;
  border-radius: 50%;
  background: #eee;
  box-shadow: 0 0 0 1px #3a3a3a;
  color: #2a2a2a;
  font-weight: 700;
  font-size: 13px;
  line-height: 15px;
  text-align: center;
}

.scroll {
  position: absolute;
  background: #7d7d7d;
  border-radius: 2px;
}

.sv { left: 469px; top: 65px; width: 4px; height: 78px; }
.sh { left: 112px; top: 269px; width: 132px; height: 4px; }

/* Bottom dock */
.bottom-tabs { margin-top: 11px; }

.debug-panel {
  flex: 1;
  display: flex;
  flex-direction: column;
}

.debug-body {
  display: flex;
  height: 214px;
  padding: 3px 0 0 3px;
}

.monitors {
  position: relative;
  width: 341px;
  height: 212px;
  background: #252b3a;
  border: 1px solid #1a1f2b;
  padding: 3px;
  overflow: hidden;
}

.mon-head {
  height: 26px;
  width: 320px;
  background: #1c2130;
  display: grid;
  grid-template-columns: 160px 160px;
  align-items: center;
  justify-items: center;
  color: #d4d6db;
  margin-bottom: 1px;
}

.mon-row {
  position: relative;
  height: 26px;
  display: flex;
  align-items: center;
  padding-left: 25px;
}

.check {
  width: 14px;
  height: 14px;
  border-radius: 3px;
  background: #4a4f5c;
  margin-right: 5px;
  color: #eee;
  font-size: 11px;
  line-height: 14px;
  text-align: center;
}

.mon-name { width: 120px; }

.mon-group {
  height: 26px;
  display: flex;
  align-items: center;
  gap: 2px;
  padding-left: 2px;
}

.mon-scroll {
  position: absolute;
  left: 332px;
  top: 126px;
  width: 4px;
  height: 39px;
  border-radius: 2px;
  background: #6b7080;
}

.graph {
  position: relative;
  width: 131px;
  height: 206px;
  margin: 3px 0 0 11px;
  background: #252b3a;
  border: 1px solid #1a1f2b;
  padding: 3px 0 0 5px;
  color: #8aa86c;
  line-height: 18px;
}

.graph-line {
  position: absolute;
  left: 24px;
  top: 2px;
  width: 100px;
  height: 2px;
  background: #9dbf78;
}

.debug-bar {
  flex: 1;
  display: flex;
  align-items: center;
  padding: 4px 0 0 9px;
  gap: 16px;
}

.debug-bar .ico { margin-left: auto; margin-right: 9px; }

/* Inspector */
.inspector {
  flex: 1;
  display: flex;
  flex-direction: column;
}

.insp-tools {
  height: 26px;
  margin-top: 3px;
  display: flex;
  align-items: center;
  padding-left: 9px;
  gap: 16px;
}

.back { margin-left: 70px; }
.insp-tools > svg:nth-child(5) { margin-left: -8px; }
.insp-tools > svg:last-child { margin-left: -4px; }

.insp-node {
  height: 34px;
  display: flex;
  align-items: center;
  padding-left: 11px;
  gap: 3px;
  color: #b9bcc3;
}

.insp-node .ico:last-child { margin-left: auto; margin-right: 9px; }

.insp-filter {
  margin: 0 3px;
  height: 26px;
}

.props {
  flex: 1;
  margin: 4px 3px 4px;
  background: #252b3a;
  border: 1px solid #1a1f2b;
  padding: 3px;
}

.section {
  height: 22px;
  background: #3d4352;
  display: flex;
  align-items: center;
  justify-content: center;
  gap: 5px;
}

.prop {
  height: 22px;
  background: #313747;
  display: flex;
  align-items: center;
  justify-content: space-between;
  padding-left: 4px;
  padding-right: 1px;
}

.layer-label {
  height: 22px;
  display: flex;
  align-items: center;
  justify-content: space-between;
  padding-left: 9px;
  color: #8a8f9a;
}

.mask { height: 26px; padding-top: 3px; padding-bottom: 0; }

.layers {
  height: 36px;
  margin-left: 8px;
  padding-left: 4px;
  background: #1f2432;
  display: flex;
  align-items: center;
  gap: 2px;
}

.cells {
  display: grid;
  grid-template-columns: repeat(5, 14px);
  grid-template-rows: 14px 14px;
  gap: 1px;
}

.cells i {
  background: #4a4f5c;
}

.cells i.lit {
  background: #a9acb3;
}

.more-btn {
  margin-left: auto;
  width: 17px;
  height: 100%;
  background: #2a3040;
  text-align: center;
  line-height: 40px;
}

/* Red rectangles drawn over the screenshot */
.mark {
  position: absolute;
  border: 1px solid #ec3a3a;
  pointer-events: none;
}

.m1 { left: 32px; top: 193px; width: 194px; height: 32px; }
.m2 { left: 28px; top: 247px; width: 185px; height: 27px; }
.m3 { left: 276px; top: 632px; width: 176px; height: 29px; }
.m4 { left: 770px; top: 319px; width: 47px; height: 41px; }
.m5 { left: 775px; top: 373px; width: 32px; height: 46px; }
```
